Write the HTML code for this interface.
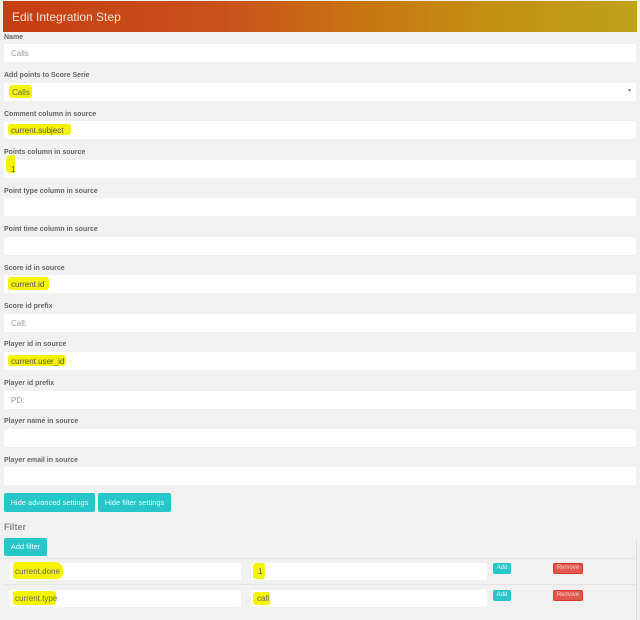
<!DOCTYPE html>
<html><head><meta charset="utf-8"><style>
*{margin:0;padding:0;box-sizing:border-box}
body{width:640px;height:620px;background:#f1f1f1;font-family:"Liberation Sans",sans-serif;position:relative;overflow:hidden}
.hdr{position:absolute;left:3px;top:1px;width:634px;height:31px;background:linear-gradient(90deg,#c63d12 0%,#c9521c 35%,#c77a10 60%,#c39414 80%,#bfa11a 100%)}
.hdr span{position:absolute;left:9px;top:9px;color:#f4e6dc;font-size:12px}
.lb{position:absolute;left:4px;font-size:7px;font-weight:bold;color:#666}
.in{position:absolute;left:4px;width:632px;height:18px;background:#fff;border-radius:2px}
.tx{position:absolute;font-size:8px;color:#777}
.hl{position:absolute;background:#f4f400;border-radius:3px}
.btn{position:absolute;background:#26c6c9;color:#e8fbfb;font-size:7.5px;text-align:center;border-radius:2px}
.rm{position:absolute;background:#e2574c;color:#f7d0cc;font-size:7px;text-align:center;border:1px solid #d4392f;border-radius:2px}
.sep{position:absolute;left:4px;width:632px;height:1px;background:#e4e4e4}
</style></head><body>
<div class="hdr"><span>Edit Integration Step</span></div>

<div class="lb" style="top:34px">Name</div><div class="in" style="top:44px"></div>
<div class="tx" style="left:11px;top:49px;color:#999">Calls</div>

<div class="lb" style="top:72px">Add points to Score Serie</div><div class="in" style="top:83px"></div>
<div class="hl" style="left:9px;top:85px;width:23px;height:13px"></div>
<div class="tx" style="left:12px;top:88px;color:#666">Calls</div>
<div class="tx" style="left:628px;top:87px;font-size:6px">▾</div>

<div class="lb" style="top:111px">Comment column in source</div><div class="in" style="top:121px"></div>
<div class="hl" style="left:8px;top:124px;width:63px;height:11px"></div>
<div class="tx" style="left:11px;top:126px;color:#555">current.subject</div>

<div class="lb" style="top:149px">Points column in source</div><div class="in" style="top:160px"></div>
<div class="hl" style="left:6px;top:155px;width:9px;height:18px;border-radius:6px 2px 2px 4px"></div>
<div class="tx" style="left:11px;top:165px;color:#555">1</div>

<div class="lb" style="top:188px">Point type column in source</div><div class="in" style="top:198px"></div>
<div class="lb" style="top:226px">Point time column in source</div><div class="in" style="top:237px"></div>

<div class="lb" style="top:265px">Score id in source</div><div class="in" style="top:275px"></div>
<div class="hl" style="left:8px;top:277px;width:41px;height:13px"></div>
<div class="tx" style="left:11px;top:280px;color:#555">current.id</div>

<div class="lb" style="top:303px">Score id prefix</div><div class="in" style="top:314px"></div>
<div class="tx" style="left:11px;top:319px;color:#999">Call:</div>

<div class="lb" style="top:341px">Player id in source</div><div class="in" style="top:352px"></div>
<div class="hl" style="left:8px;top:355px;width:58px;height:11px"></div>
<div class="tx" style="left:11px;top:357px;color:#555">current.user_id</div>

<div class="lb" style="top:380px">Player id prefix</div><div class="in" style="top:391px"></div>
<div class="tx" style="left:11px;top:396px;color:#999">PD:</div>

<div class="lb" style="top:418px">Player name in source</div><div class="in" style="top:429px"></div>
<div class="lb" style="top:457px">Player email in source</div><div class="in" style="top:467px"></div>

<div class="btn" style="left:4px;top:493px;width:91px;height:19px;line-height:19px">Hide advanced settings</div>
<div class="btn" style="left:98px;top:493px;width:73px;height:19px;line-height:19px">Hide filter settings</div>

<div style="position:absolute;left:4px;top:522px;font-size:9px;font-weight:bold;color:#888">Filter</div>
<div class="btn" style="left:4px;top:538px;width:43px;height:18px;line-height:18px">Add filter</div>

<div class="sep" style="top:558px"></div>
<div class="sep" style="top:584px"></div>
<div style="position:absolute;left:636px;top:540px;width:1px;height:80px;background:#ddd"></div>

<div class="in" style="left:9px;top:563px;width:232px;height:17px"></div>
<div class="hl" style="left:13px;top:562px;width:50px;height:17px;border-radius:4px 8px 6px 3px"></div>
<div class="tx" style="left:15px;top:567px;color:#666">current.done</div>
<div class="in" style="left:251px;top:563px;width:236px;height:17px"></div>
<div class="hl" style="left:253px;top:563px;width:12px;height:16px"></div>
<div class="tx" style="left:258px;top:567px;color:#666">1</div>
<div class="btn" style="left:493px;top:563px;width:18px;height:11px;line-height:11px;font-size:6px">Add</div>
<div class="rm" style="left:553px;top:563px;width:30px;height:11px;line-height:9px;font-size:6px">Remove</div>

<div class="in" style="left:9px;top:590px;width:232px;height:17px"></div>
<div class="hl" style="left:13px;top:591px;width:43px;height:14px"></div>
<div class="tx" style="left:15px;top:594px;color:#666">current.type</div>
<div class="in" style="left:251px;top:590px;width:236px;height:17px"></div>
<div class="hl" style="left:253px;top:592px;width:17px;height:13px"></div>
<div class="tx" style="left:257px;top:594px;color:#666">call</div>
<div class="btn" style="left:493px;top:590px;width:18px;height:11px;line-height:11px;font-size:6px">Add</div>
<div class="rm" style="left:553px;top:590px;width:30px;height:11px;line-height:9px;font-size:6px">Remove</div>
</body></html>
